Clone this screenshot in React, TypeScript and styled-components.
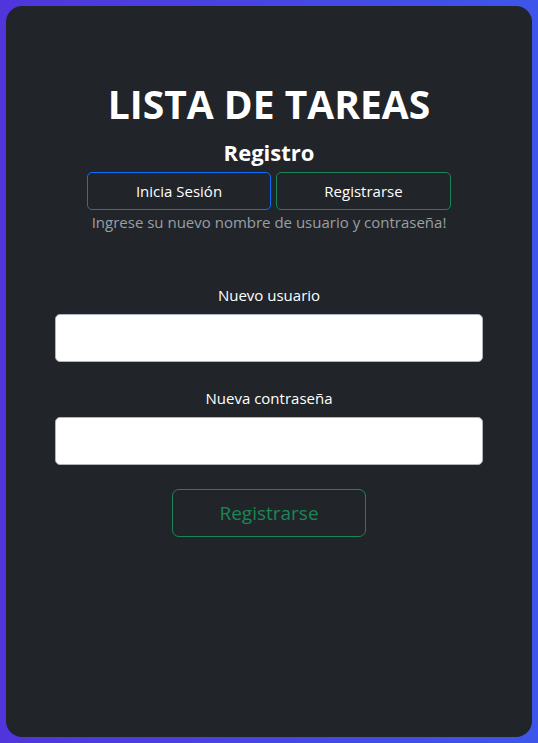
import React from "react";
import styled, { createGlobalStyle } from "styled-components";

const GlobalStyle = createGlobalStyle`
    * {
        box-sizing: border-box;
    }
    body {
        margin: 0;
        font-family: "Open Sans", "Noto Sans", sans-serif;
        background: linear-gradient(90deg, #5035db 0%, #3d56e9 100%);
        min-height: 100vh;
    }
`;

const Page = styled.main`
    padding: 6px;
    min-height: 100vh;
    display: flex;
`;

const Card = styled.section`
    flex: 1;
    background: #212529;
    border-radius: 16px;
    padding-top: 74px;
    display: flex;
    flex-direction: column;
    align-items: center;
    color: #fff;
`;

const Title = styled.h1`
    margin: 0;
    font-size: 39px;
    font-weight: 700;
    line-height: 48px;
`;

const Subtitle = styled.h4`
    margin: 10px 0 5px;
    font-size: 22px;
    font-weight: 700;
    line-height: 29px;
`;

const Tabs = styled.div`
    display: flex;
    gap: 5px;
`;

const TabButton = styled.button<{ $tone: string }>`
    font-family: inherit;
    font-size: 15px;
    line-height: 24px;
    padding: 6px 0;
    width: ${(p) => (p.$tone === "blue" ? "184px" : "175px")};
    color: #fff;
    background: transparent;
    border: 1px solid ${(p) => (p.$tone === "blue" ? "#0d6efd" : "#198754")};
    border-radius: 5px;
`;

const Hint = styled.p`
    margin: 0;
    font-size: 15px;
    line-height: 24px;
    color: #9a9fa4;
`;

const Form = styled.form`
    width: 428px;
    margin-top: 49px;
    display: flex;
    flex-direction: column;
    align-items: center;
`;

const Field = styled.div`
    width: 100%;
    display: flex;
    flex-direction: column;
    align-items: center;
    margin-bottom: 24px;
`;

const Label = styled.label`
    font-size: 15px;
    line-height: 24px;
    margin-bottom: 7px;
`;

const Input = styled.input`
    width: 100%;
    height: 48px;
    border: 1px solid #adb5bd;
    border-radius: 5px;
    background: #fff;
    font-size: 20px;
    padding: 8px 16px;
    outline: none;
`;

const Submit = styled.button`
    font-family: inherit;
    width: 194px;
    height: 48px;
    font-size: 19px;
    color: #198754;
    background: transparent;
    border: 1px solid #198754;
    border-radius: 7px;
`;

export default function App() {
    return (
        <>
            <GlobalStyle />
            <Page>
                <Card>
                    <Title>LISTA DE TAREAS</Title>
                    <Subtitle>Registro</Subtitle>
                    <Tabs>
                        <TabButton $tone="blue">Inicia Sesión</TabButton>
                        <TabButton $tone="green">Registrarse</TabButton>
                    </Tabs>
                    <Hint>Ingrese su nuevo nombre de usuario y contraseña!</Hint>

                    <Form onSubmit={(e) => e.preventDefault()}>
                        <Field>
                            <Label htmlFor="user">Nuevo usuario</Label>
                            <Input id="user" type="text" />
                        </Field>
                        <Field>
                            <Label htmlFor="pass">Nueva contraseña</Label>
                            <Input id="pass" type="password" />
                        </Field>
                        <Submit type="submit">Registrarse</Submit>
                    </Form>
                </Card>
            </Page>
        </>
    );
}
